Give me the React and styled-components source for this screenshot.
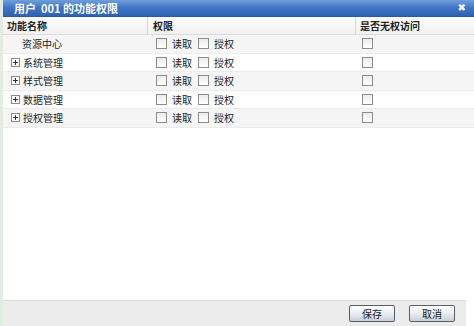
import React from 'react';
import styled, { createGlobalStyle } from 'styled-components';

const GlobalStyle = createGlobalStyle`
  html, body {
    margin: 0;
    padding: 0;
    background: #fff;
  }
  body {
    font-family: "Noto Sans CJK SC", "DejaVu Sans", sans-serif;
    font-size: 10px;
    color: #222;
  }
`;

const Dialog = styled.div`
  width: 471px;
  height: 326px;
  border-left: 3px solid #e4eae4;
  display: flex;
  flex-direction: column;
  background: #fff;
`;

const TitleBar = styled.div`
  height: 16px;
  flex-shrink: 0;
  display: flex;
  align-items: center;
  justify-content: space-between;
  padding: 0 8px 0 11px;
  background: linear-gradient(#6f9fd9, #3f74c4 50%, #2f62b2);
  border-bottom: 1px solid #2a5aa6;
  color: #fff;
  font-weight: bold;
  font-size: 11px;
  line-height: 16px;
`;

const Close = styled.span`
  font-family: "DejaVu Sans", sans-serif;
  font-size: 10px;
  font-weight: bold;
  color: #fff;
`;

const Grid = styled.div`
  display: grid;
  grid-template-columns: 145px 208px 1fr;
`;

const HeadCell = styled.div`
  height: 17px;
  line-height: 17px;
  padding-left: ${(p) => p.$pad || 4}px;
  font-weight: bold;
  color: #222;
  background: linear-gradient(#fdfdfd, #f1f1f1);
  border-bottom: 1px solid #dcdcdc;
  border-right: ${(p) => (p.$last ? 'none' : '1px solid #d6d6d6')};
`;

const Cell = styled.div`
  height: 18.5px;
  display: flex;
  align-items: center;
  box-sizing: border-box;
  padding-left: ${(p) => p.$pad || 0}px;
  background: ${(p) => (p.$odd ? '#f5f5f5' : '#fff')};
  border-bottom: 1px solid #ececec;
  color: #222;
`;

const Expander = styled.span`
  width: 7px;
  height: 7px;
  border: 1px solid #8a8a8a;
  position: relative;
  box-sizing: content-box;
  background: #fff;
  margin-right: 3px;
  &::before {
    content: '';
    position: absolute;
    left: 1px;
    top: 3px;
    width: 5px;
    height: 1px;
    background: #333;
  }
  &::after {
    content: '';
    position: absolute;
    left: 3px;
    top: 1px;
    width: 1px;
    height: 5px;
    background: #333;
  }
`;

const Spacer = styled.span`
  width: 11px;
`;

const Box = styled.span`
  width: 9px;
  height: 9px;
  border: 1px solid #8c8c8c;
  background: linear-gradient(#ececec, #fff);
  margin-right: ${(p) => p.$gap || 0}px;
  flex-shrink: 0;
`;

const Label = styled.span`
  margin-right: 6px;
`;

const Body = styled.div`
  flex: 1;
`;

const Footer = styled.div`
  height: 25px;
  flex-shrink: 0;
  margin-right: 8px;
  border-top: 1px solid #dcdcdc;
  background: #ececec;
  display: flex;
  align-items: center;
  justify-content: flex-end;
  gap: 14px;
  padding-right: 11px;
`;

const Button = styled.button`
  width: 46px;
  height: 17px;
  padding: 0;
  border: 1px solid #5a5f66;
  border-radius: 2px;
  background: linear-gradient(#ffffff, #e6eaf0 55%, #c9d0da);
  font-family: "Noto Sans CJK SC", sans-serif;
  font-size: 10px;
  line-height: 15px;
  color: #222;
`;

const rows = [
  { name: '资源中心', expand: false },
  { name: '系统管理', expand: true },
  { name: '样式管理', expand: true },
  { name: '数据管理', expand: true },
  { name: '授权管理', expand: true },
];

export default function App() {
  return (
    <>
      <GlobalStyle />
      <Dialog>
        <TitleBar>
          <span>用户&nbsp;&nbsp;001 的功能权限</span>
          <Close>✖</Close>
        </TitleBar>
        <Body>
          <Grid>
            <HeadCell>功能名称</HeadCell>
            <HeadCell $pad={5}>权限</HeadCell>
            <HeadCell $pad={4} $last>是否无权访问</HeadCell>
            {rows.map((r, i) => (
              <React.Fragment key={r.name}>
                <Cell $odd={i % 2 === 0} $pad={8}>
                  {r.expand ? <Expander /> : <Spacer />}
                  {r.name}
                </Cell>
                <Cell $odd={i % 2 === 0} $pad={8}>
                  <Box $gap={5} />
                  <Label>读取</Label>
                  <Box $gap={5} />
                  <Label>授权</Label>
                </Cell>
                <Cell $odd={i % 2 === 0} $pad={6}>
                  <Box />
                </Cell>
              </React.Fragment>
            ))}
          </Grid>
        </Body>
        <Footer>
          <Button>保存</Button>
          <Button>取消</Button>
        </Footer>
      </Dialog>
    </>
  );
}
